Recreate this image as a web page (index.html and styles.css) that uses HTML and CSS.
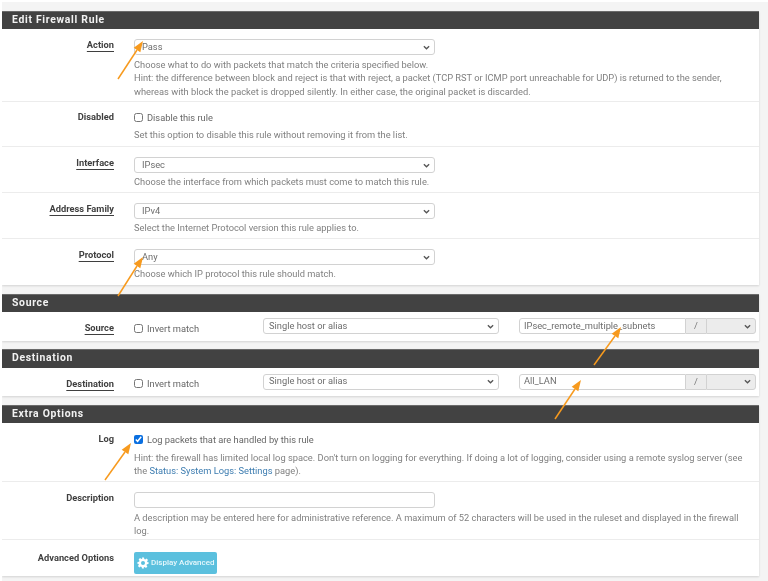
FILE: index.html
```html
<!DOCTYPE html>
<html lang="en">
<head>
<meta charset="utf-8">
<title>Edit Firewall Rule</title>
<link rel="stylesheet" href="styles.css">
</head>
<body>
<main class="page">
  <section class="panel">
    <h2 class="panel-title">Edit Firewall Rule</h2>
    <div class="row row-action">
      <div class="label"><u>Action</u></div>
      <div class="field">
        <select class="select wide"><option>Pass</option></select>
        <p class="help">Choose what to do with packets that match the criteria specified below.<br>Hint: the difference between block and reject is that with reject, a packet (TCP RST or ICMP port unreachable for UDP) is returned to the sender, whereas with block the packet is dropped silently. In either case, the original packet is discarded.</p>
      </div>
    </div>
    <div class="row row-check">
      <div class="label">Disabled</div>
      <div class="field">
        <label class="check"><input type="checkbox"><span>Disable this rule</span></label>
        <p class="help">Set this option to disable this rule without removing it from the list.</p>
      </div>
    </div>
    <div class="row">
      <div class="label"><u>Interface</u></div>
      <div class="field">
        <select class="select wide"><option>IPsec</option></select>
        <p class="help">Choose the interface from which packets must come to match this rule.</p>
      </div>
    </div>
    <div class="row">
      <div class="label"><u>Address Family</u></div>
      <div class="field">
        <select class="select wide"><option>IPv4</option></select>
        <p class="help">Select the Internet Protocol version this rule applies to.</p>
      </div>
    </div>
    <div class="row">
      <div class="label"><u>Protocol</u></div>
      <div class="field">
        <select class="select wide"><option>Any</option></select>
        <p class="help">Choose which IP protocol this rule should match.</p>
      </div>
    </div>
  </section>

  <section class="panel">
    <h2 class="panel-title">Source</h2>
    <div class="row row-address">
      <div class="label label-address"><u>Source</u></div>
      <label class="check check-address"><input type="checkbox"><span>Invert match</span></label>
      <select class="select type"><option>Single host or alias</option></select>
      <div class="address">
        <input class="text" type="text" value="IPsec_remote_multiple_subnets">
        <span class="slash">/</span>
        <select class="select mask"><option></option></select>
      </div>
    </div>
  </section>

  <section class="panel">
    <h2 class="panel-title">Destination</h2>
    <div class="row row-address">
      <div class="label label-address"><u>Destination</u></div>
      <label class="check check-address"><input type="checkbox"><span>Invert match</span></label>
      <select class="select type"><option>Single host or alias</option></select>
      <div class="address">
        <input class="text" type="text" value="All_LAN">
        <span class="slash">/</span>
        <select class="select mask"><option></option></select>
      </div>
    </div>
  </section>

  <section class="panel">
    <h2 class="panel-title">Extra Options</h2>
    <div class="row row-log">
      <div class="label">Log</div>
      <div class="field">
        <label class="check"><input type="checkbox" checked><span>Log packets that are handled by this rule</span></label>
        <p class="help">Hint: the firewall has limited local log space. Don't turn on logging for everything. If doing a lot of logging, consider using a remote syslog server (see the <a href="#">Status: System Logs: Settings</a> page).</p>
      </div>
    </div>
    <div class="row row-desc">
      <div class="label">Description</div>
      <div class="field">
        <input class="text wide" type="text">
        <p class="help">A description may be entered here for administrative reference. A maximum of 52 characters will be used in the ruleset and displayed in the firewall log.</p>
      </div>
    </div>
    <div class="row row-adv">
      <div class="label">Advanced Options</div>
      <div class="field">
        <button class="btn" type="button">
          <svg class="gear" viewBox="0 0 24 24" aria-hidden="true"><path d="M10 1h4l.6 3.2 1.9.8 2.7-1.8 2.8 2.8-1.8 2.7.8 1.9L23 10v4l-3.2.6-.8 1.9 1.8 2.7-2.8 2.8-2.7-1.8-1.9.8L13.9 23h-4l-.6-3.2-1.9-.8-2.7 1.8-2.8-2.8 1.8-2.7-.8-1.9L1 14v-4l3.2-.6.8-1.9-1.8-2.7 2.8-2.8 2.7 1.8 1.9-.8zM12 8a4 4 0 1 0 0 8 4 4 0 0 0 0-8z" fill-rule="evenodd"/></svg>
          <span>Display Advanced</span>
        </button>
      </div>
    </div>
  </section>
</main>

<svg class="arrows" viewBox="0 0 768 581" aria-hidden="true">
  <g class="arrow">
    <path d="M118 79 137 50"/><polygon points="143,41 133.7,47.8 140.3,52.2"/>
    <path d="M118 296 137 266"/><polygon points="143,257 133.7,263.8 140.3,268.2"/>
    <path d="M594 365 615 336"/><polygon points="621,327 611.7,333.8 618.3,338.2"/>
    <path d="M555 419 575 389"/><polygon points="581,380 571.7,386.8 578.3,391.2"/>
    <path d="M105 480 125 452"/><polygon points="131,443 121.7,449.8 128.3,454.2"/>
  </g>
</svg>
</body>
</html>
```

FILE: styles.css
```css
html {
  background: #fff;
}

body {
  margin: 2px 0 0 2px;
  height: 579px;
  overflow: hidden;
  position: relative;
  background: #f4f4f4;
  font-family: Roboto, "Liberation Sans", sans-serif;
  font-size: 9.3px;
  color: #5f5f5f;
  filter: blur(0.4px);
}

.page {
  display: flex;
  flex-direction: column;
  gap: 8.5px;
  padding: 8.5px 9px 0 0;
}

.panel {
  background: #fff;
  box-shadow: 0 1px 2px rgba(0, 0, 0, 0.14);
}

.panel-title {
  margin: 0;
  height: 18.5px;
  padding-left: 10px;
  background: #424242;
  border-top: 1px solid #6a6a6a;
  box-sizing: border-box;
  color: #f2f2f2;
  font-size: 10.4px;
  font-weight: 700;
  letter-spacing: 0.7px;
  line-height: 16.6px;
}

.row {
  display: grid;
  grid-template-columns: 112px 1fr;
  column-gap: 20px;
  height: 46px;
  box-sizing: border-box;
  padding-top: 10px;
  border-bottom: 1px solid #ececec;
}

.row:last-child {
  border-bottom: 0;
}

.row-action {
  height: 73px;
}

.row-action .help {
  margin-top: 3px;
}

.row-check {
  height: 45px;
  padding-top: 9px;
}

.row-check .help {
  margin-top: 4px;
}

.row-address {
  display: flex;
  column-gap: 0;
  height: 28.5px;
  padding-top: 6px;
}

.row-log {
  height: 59px;
  padding-top: 10px;
}

.row-log .help {
  margin-top: 5px;
}

.row-desc {
  height: 58px;
  padding-top: 9.5px;
}

.row-desc .help {
  margin-top: 3px;
}

.row-adv {
  height: 36px;
  padding-top: 11.5px;
}

.label {
  text-align: right;
  color: #3f3f3f;
  font-weight: 700;
  line-height: 12px;
}

.label u {
  text-underline-offset: 3px;
}

.label-address {
  width: 112px;
  margin: 4px 20px 0 0;
}

.field {
  min-width: 0;
  padding-right: 12px;
}

.select,
.text {
  display: block;
  box-sizing: border-box;
  height: 16px;
  margin: 0;
  border: 1px solid #d2d2d2;
  border-radius: 3px;
  background-color: #fff;
  color: #6d6d6d;
  font-family: inherit;
  font-size: 9.3px;
  padding: 0 0 2px 4px;
  outline: 0;
}

.select {
  appearance: none;
  padding-left: 7px;
  background-image: url("data:image/svg+xml,%3Csvg xmlns='http://www.w3.org/2000/svg' viewBox='0 0 8 5'%3E%3Cpath d='M1 1l3 3 3-3' fill='none' stroke='%23555' stroke-width='1.5'/%3E%3C/svg%3E");
  background-repeat: no-repeat;
  background-position: right 4px center;
  background-size: 7px 5px;
}

.wide {
  width: 301px;
}

.help {
  margin: 2px 0 0;
  color: #808080;
  font-size: 9.3px;
  line-height: 13.4px;
}

.help a {
  color: #3c7cb0;
  text-decoration: none;
}

.check {
  display: flex;
  align-items: center;
  height: 13px;
  color: #666;
}

.check input {
  width: 9px;
  height: 9px;
  margin: 0 4px 0 0;
  accent-color: #0a6fe0;
}

.check-address {
  width: 129px;
  margin-top: 3.5px;
  flex: none;
}

.type {
  width: 236px;
  flex: none;
  padding-left: 5px;
}

.address {
  display: flex;
  align-self: flex-start;
  margin-left: 20px;
  width: 237px;
  flex: none;
}

.address .text {
  flex: 1;
  min-width: 0;
  border-radius: 3px 0 0 3px;
}

.slash {
  width: 20px;
  height: 16px;
  flex: none;
  box-sizing: border-box;
  background: #ececec;
  border: 1px solid #d2d2d2;
  border-width: 1px 0;
  color: #777;
  line-height: 14px;
  text-align: center;
}

.mask {
  width: 50px;
  flex: none;
  background-color: #ececec;
  border-radius: 0 3px 3px 0;
}

.btn {
  display: flex;
  align-items: center;
  gap: 2px;
  width: 83px;
  height: 22px;
  padding: 0 0 0 3px;
  border: 0;
  border-radius: 2px;
  background: #5bc0de;
  color: #e6f7fc;
  font-family: inherit;
  font-size: 8px;
  font-weight: 500;
  white-space: nowrap;
}

.gear {
  width: 12px;
  height: 12px;
  fill: #fff;
  flex: none;
}

.arrows {
  position: absolute;
  left: -2px;
  top: -2px;
  width: 768px;
  height: 581px;
  pointer-events: none;
}

.arrow path {
  fill: none;
  stroke: #f79a1e;
  stroke-width: 1.5;
}

.arrow polygon {
  fill: #f79a1e;
}
```
